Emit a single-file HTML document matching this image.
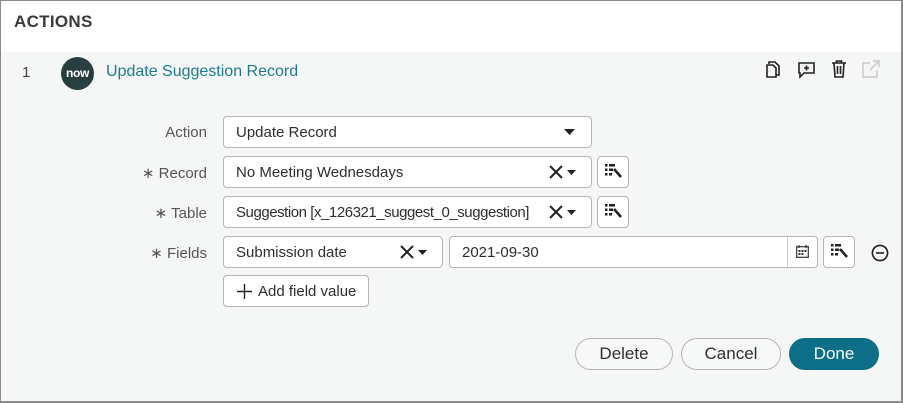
<!DOCTYPE html>
<html><head><meta charset="utf-8"><style>
*{box-sizing:border-box;margin:0;padding:0}
body{width:903px;height:403px;background:#fff;font-family:"Liberation Sans",sans-serif;color:#2e2e2e;position:relative;overflow:hidden}
.frame{position:absolute;left:0;top:0;width:903px;height:403px;border:1px solid #8a8a8a;border-right:2px solid #8a8a8a;border-bottom:2px solid #8a8a8a}
.hdr{position:absolute;left:14px;top:12px;font-size:17px;font-weight:bold;color:#3a3a3a;letter-spacing:.3px}
.body{position:absolute;left:1px;top:52px;width:900px;height:349px;background:#f5f7f7}
.abs{position:absolute}
.num{left:22px;top:64px;font-size:15px;color:#444}
.logo{left:61px;top:57px;width:33px;height:33px;border-radius:50%;background:#293e40;color:#fff;font-size:12px;font-weight:bold;text-align:center;line-height:33px;letter-spacing:-.3px}
.title{left:106px;top:63px;font-size:16px;color:#1f7a8c}
.lbl{font-size:15px;color:#555;text-align:right;width:120px;left:87px}
.fld{background:#fff;border:1px solid #b5b5b5;border-radius:4px;height:32px;font-size:15px;line-height:31px;padding-left:12px;white-space:nowrap}
.btn{background:#fff;border:1px solid #b5b5b5;border-radius:4px;height:32px;width:32px}
.ic{position:absolute}
.pill{border:1px solid #b5b5b5;border-radius:16px;height:32px;font-size:17px;text-align:center;line-height:30px;background:#f7f9f9}
</style></head><body>
<div class="hdr">ACTIONS</div>
<div class="body"></div>
<div class="abs num">1</div>
<div class="abs logo">now</div>
<div class="abs title">Update Suggestion Record</div>

<svg class="ic" style="left:765px;top:60px" width="17" height="19" viewBox="0 0 17 19" fill="none" stroke="#222" stroke-width="1.6"><path d="M4 4V2h6l4 4v9h-3"/><path d="M2 5h6l3 3v9H2z"/></svg>
<svg class="ic" style="left:797px;top:61px" width="19" height="18" viewBox="0 0 19 18" fill="none" stroke="#222" stroke-width="1.6"><path d="M2 2h15v10H7l-4 4v-4H2z"/><path d="M9.5 4.5v5M7 7h5"/></svg>
<svg class="ic" style="left:831px;top:60px" width="16" height="18" viewBox="0 0 16 18" fill="none" stroke="#222" stroke-width="1.6"><path d="M1 3h14M5.5 3V1h5v2M3 3l1 14h8l1-14M6.5 6v8M9.5 6v8"/></svg>
<svg class="ic" style="left:862px;top:60px" width="18" height="18" viewBox="0 0 18 18" fill="none" stroke="#c8c8c8" stroke-width="1.4"><path d="M8 3H1v14h14v-7M11 1h6v6M17 1L8 10"/></svg>

<div class="abs lbl" style="top:124px">Action</div>
<div class="abs fld" style="left:223px;top:116px;width:369px">Update Record</div>
<svg class="ic" style="left:564px;top:129px" width="11" height="7"><path d="M0 0h11L5.5 6z" fill="#222"/></svg>

<div class="abs lbl" style="top:164px">∗ Record</div>
<div class="abs fld" style="left:223px;top:156px;width:369px">No Meeting Wednesdays</div>

<div class="abs lbl" style="top:204px">∗ Table</div>
<div class="abs fld" style="left:223px;top:196px;width:369px;letter-spacing:-.45px">Suggestion [x_126321_suggest_0_suggestion]</div>

<div class="abs lbl" style="top:244px">∗ Fields</div>
<div class="abs fld" style="left:223px;top:236px;width:220px">Submission date</div>
<div class="abs fld" style="left:449px;top:236px;width:369px">2021-09-30</div>
<div class="abs" style="left:787px;top:237px;width:1px;height:30px;background:#ccc"></div>

<svg class="ic" style="left:549px;top:165px" width="28" height="14"><path d="M1 1l12 12M13 1L1 13" stroke="#222" stroke-width="2"/><path d="M18 5h9l-4.5 5z" fill="#222"/></svg>
<svg class="ic" style="left:549px;top:205px" width="28" height="14"><path d="M1 1l12 12M13 1L1 13" stroke="#222" stroke-width="2"/><path d="M18 5h9l-4.5 5z" fill="#222"/></svg>
<svg class="ic" style="left:400px;top:245px" width="28" height="14"><path d="M1 1l12 12M13 1L1 13" stroke="#222" stroke-width="2"/><path d="M18 5h9l-4.5 5z" fill="#222"/></svg>

<div class="abs btn" style="left:597px;top:156px"></div>
<div class="abs btn" style="left:597px;top:196px"></div>
<div class="abs btn" style="left:823px;top:236px"></div>
<svg class="ic" style="left:605px;top:164px" width="17" height="15"><g fill="#222"><rect x="0" y="0" width="2.5" height="2.5"/><rect x="4" y="0" width="6" height="2.5"/><rect x="0" y="4.5" width="2.5" height="2.5"/><rect x="4" y="4.5" width="4" height="2.5"/><rect x="0" y="9" width="2.5" height="2.5"/><rect x="4" y="9" width="3" height="2.5"/></g><path d="M9 5l7 8" stroke="#222" stroke-width="2.6"/></svg>
<svg class="ic" style="left:605px;top:204px" width="17" height="15"><g fill="#222"><rect x="0" y="0" width="2.5" height="2.5"/><rect x="4" y="0" width="6" height="2.5"/><rect x="0" y="4.5" width="2.5" height="2.5"/><rect x="4" y="4.5" width="4" height="2.5"/><rect x="0" y="9" width="2.5" height="2.5"/><rect x="4" y="9" width="3" height="2.5"/></g><path d="M9 5l7 8" stroke="#222" stroke-width="2.6"/></svg>
<svg class="ic" style="left:831px;top:244px" width="17" height="15"><g fill="#222"><rect x="0" y="0" width="2.5" height="2.5"/><rect x="4" y="0" width="6" height="2.5"/><rect x="0" y="4.5" width="2.5" height="2.5"/><rect x="4" y="4.5" width="4" height="2.5"/><rect x="0" y="9" width="2.5" height="2.5"/><rect x="4" y="9" width="3" height="2.5"/></g><path d="M9 5l7 8" stroke="#222" stroke-width="2.6"/></svg>

<svg class="ic" style="left:796px;top:245px" width="13" height="13" viewBox="0 0 13 13"><rect x=".7" y="1.7" width="11.6" height="10.6" fill="none" stroke="#333" stroke-width="1.2"/><path d="M3 0v3M10 0v3" stroke="#333" stroke-width="1.2"/><g fill="#333"><rect x="2.5" y="5" width="2" height="2"/><rect x="5.5" y="5" width="2" height="2"/><rect x="8.5" y="5" width="2" height="2"/><rect x="2.5" y="8" width="2" height="2"/><rect x="5.5" y="8" width="2" height="2"/></g></svg>

<svg class="ic" style="left:871px;top:244px" width="18" height="18"><circle cx="9" cy="9" r="7.6" fill="none" stroke="#222" stroke-width="1.6"/><path d="M5 9h8" stroke="#222" stroke-width="1.6"/></svg>

<div class="abs fld" style="left:223px;top:275px;width:146px;padding-left:34px">Add field value</div>
<svg class="ic" style="left:237px;top:284px" width="15" height="15"><path d="M7.5 0v15M0 7.5h15" stroke="#222" stroke-width="1.4"/></svg>

<div class="abs pill" style="left:575px;top:338px;width:98px">Delete</div>
<div class="abs pill" style="left:681px;top:338px;width:100px">Cancel</div>
<div class="abs pill" style="left:789px;top:338px;width:90px;background:#0c6f87;border-color:#0c6f87;color:#fff">Done</div>

<div class="frame"></div>
</body></html>
